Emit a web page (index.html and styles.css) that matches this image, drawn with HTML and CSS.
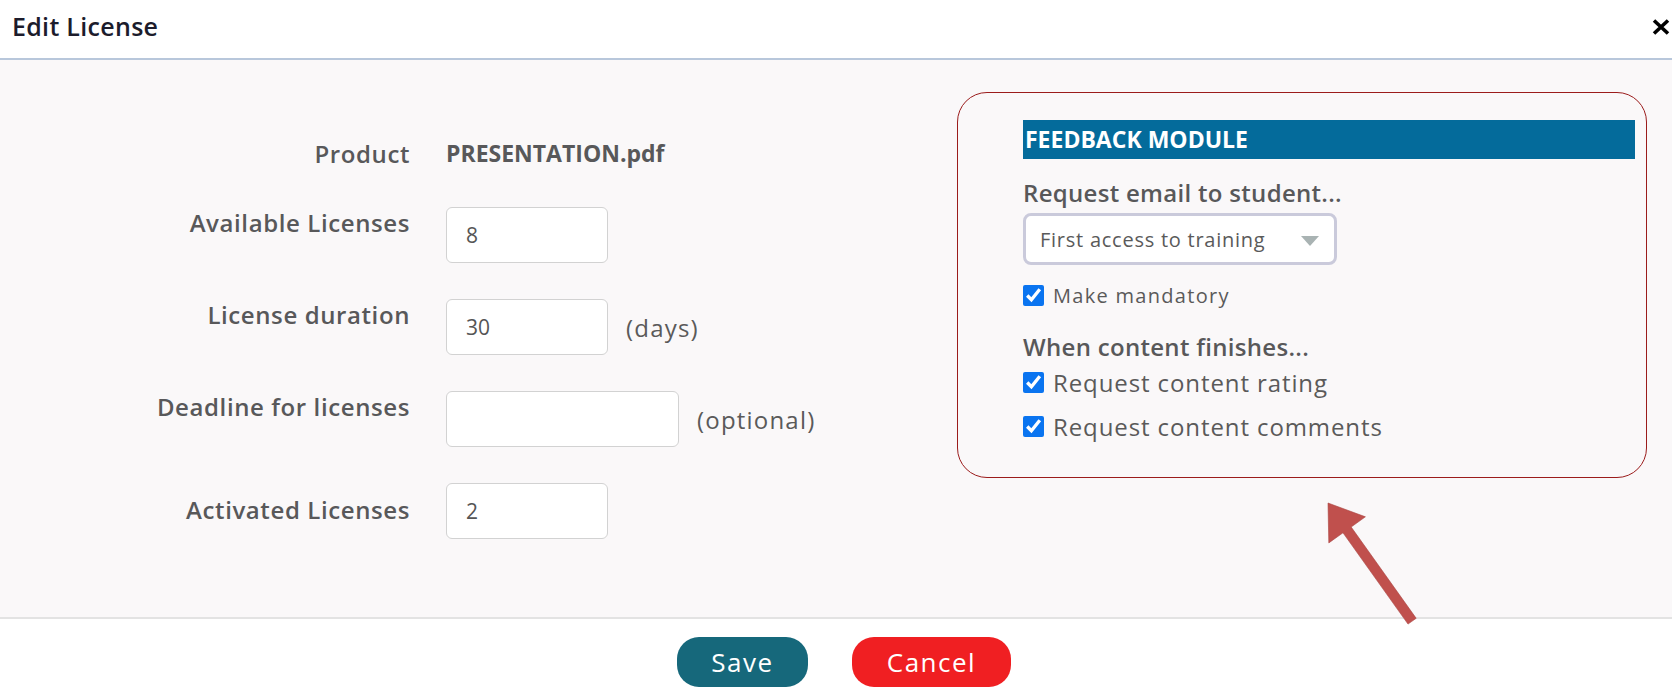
FILE: index.html
```html
<!DOCTYPE html>
<html lang="en">
<head>
    <meta charset="UTF-8">
    <title>Edit License</title>
    <link rel="stylesheet" href="styles.css">
</head>
<body>
    <div class="modal">
        <header class="modal-header">
            <h2 class="modal-title">Edit License</h2>
            <button class="close-btn" type="button" aria-label="Close">
                <svg width="18" height="16" viewBox="0 0 18 16">
                    <path d="M2 1.5 L16 14.5 M16 1.5 L2 14.5" stroke="#000" stroke-width="3.6" fill="none"/>
                </svg>
            </button>
        </header>

        <main class="modal-body">
            <form class="license-form">
                <div class="field-row product-row">
                    <span class="field-label">Product</span>
                    <span class="product-name">PRESENTATION.pdf</span>
                </div>
                <div class="field-row">
                    <label class="field-label" for="available">Available Licenses</label>
                    <div class="field-value">
                        <input class="text-input" id="available" type="text" value="8">
                    </div>
                </div>
                <div class="field-row">
                    <label class="field-label" for="duration">License duration</label>
                    <div class="field-value">
                        <input class="text-input" id="duration" type="text" value="30">
                        <span class="field-hint">(days)</span>
                    </div>
                </div>
                <div class="field-row">
                    <label class="field-label" for="deadline">Deadline for licenses</label>
                    <div class="field-value">
                        <input class="text-input wide" id="deadline" type="text" value="">
                        <span class="field-hint">(optional)</span>
                    </div>
                </div>
                <div class="field-row">
                    <label class="field-label low" for="activated">Activated Licenses</label>
                    <div class="field-value">
                        <input class="text-input" id="activated" type="text" value="2">
                    </div>
                </div>
            </form>

            <section class="feedback-box">
                <div class="feedback-title">FEEDBACK MODULE</div>
                <div class="feedback-question">Request email to student...</div>
                <div class="select-wrap">
                    <select class="select-input">
                        <option>First access to training</option>
                        <option>After finishing the content</option>
                    </select>
                </div>
                <label class="check-row small">
                    <input type="checkbox" checked>
                    <span>Make mandatory</span>
                </label>
                <div class="feedback-question second">When content finishes...</div>
                <label class="check-row">
                    <input type="checkbox" checked>
                    <span>Request content rating</span>
                </label>
                <label class="check-row">
                    <input type="checkbox" checked>
                    <span>Request content comments</span>
                </label>
            </section>

            <!-- flecha que señala el módulo de feedback -->
            <svg class="pointer-arrow" width="110" height="140" viewBox="0 0 110 140">
                <polygon points="8,8 45.4,21.8 31.2,32 96.2,123.3 88,129.1 23,37.8 8.8,47.9" fill="#c0504d" stroke="#a94442" stroke-width="0.6"/>
            </svg>
        </main>

        <footer class="modal-footer">
            <button class="btn btn-save" type="button">Save</button>
            <button class="btn btn-cancel" type="button">Cancel</button>
        </footer>
    </div>
</body>
</html>
```

FILE: styles.css
```css
/* Estilos generales */
body {
    margin: 0;
    font-family: "Open Sans", "Noto Sans", sans-serif;
    color: #555;
    background: #fff;
}

.modal {
    width: 1672px;
    height: 694px;
    display: flex;
    flex-direction: column;
}

/* Cabecera */
.modal-header {
    height: 58px;
    border-bottom: 2px solid #b8c7db;
    display: flex;
    align-items: center;
    justify-content: space-between;
    padding: 0 2px 0 12px;
}

.modal-title {
    margin: 0 0 7px 0;
    font-size: 25px;
    font-weight: 600;
    letter-spacing: 0.3px;
    color: #1c1c2c;
}

.close-btn {
    border: none;
    background: none;
    padding: 0;
    margin-bottom: 5px;
    display: flex;
}

/* Cuerpo */
.modal-body {
    position: relative;
    height: 557px;
    box-sizing: border-box;
    background: #faf8f9;
    padding-top: 32px;
    display: grid;
    grid-template-columns: 957px 690px;
    align-items: start;
}

.license-form {
    padding-top: 46px;
    display: flex;
    flex-direction: column;
    gap: 36px;
}

.field-row {
    display: grid;
    grid-template-columns: 410px 1fr;
    column-gap: 36px;
    align-items: start;
}

.product-row {
    margin-bottom: 2px;
}

.field-label {
    text-align: right;
    font-size: 24px;
    line-height: 31px;
    font-weight: 600;
    letter-spacing: 0.6px;
    color: #58585a;
}

.field-label.low {
    padding-top: 11px;
}

.product-name {
    font-size: 23px;
    line-height: 31px;
    font-weight: 700;
    color: #58585a;
}

.field-value {
    display: flex;
    align-items: center;
    gap: 18px;
}

.text-input {
    width: 162px;
    height: 56px;
    box-sizing: border-box;
    border: 1.5px solid #d2d2d2;
    border-radius: 6px;
    background: #fff;
    padding: 0 0 0 19px;
    font-family: inherit;
    font-size: 21px;
    color: #555;
}

.text-input.wide {
    width: 233px;
}

.field-hint {
    font-size: 24px;
    letter-spacing: 1.2px;
    color: #5a5a5a;
}

/* Caja del módulo de feedback */
.feedback-box {
    height: 386px;
    box-sizing: border-box;
    border: 1px solid #9b1c1c;
    border-radius: 30px;
    padding: 27px 11px 0 65px;
}

.feedback-title {
    height: 39px;
    line-height: 39px;
    background: #046b9b;
    color: #fff;
    font-size: 23px;
    font-weight: 700;
    padding-left: 2px;
}

.feedback-question {
    margin-top: 18px;
    font-size: 24px;
    line-height: 31px;
    font-weight: 600;
    letter-spacing: 0.3px;
    color: #58585a;
}

.feedback-question.second {
    margin-top: 25px;
}

.select-wrap {
    position: relative;
    width: 314px;
    height: 52px;
    margin-top: 5px;
}

.select-input {
    appearance: none;
    width: 100%;
    height: 100%;
    box-sizing: border-box;
    border: 3px solid #cacadb;
    border-radius: 8px;
    background: #fff;
    padding-left: 14px;
    font-family: inherit;
    font-size: 20px;
    letter-spacing: 0.75px;
    color: #5a5a5a;
}

/* triangulo del desplegable */
.select-wrap::after {
    content: "";
    position: absolute;
    right: 18px;
    top: 23px;
    border-left: 9px solid transparent;
    border-right: 9px solid transparent;
    border-top: 10px solid #a9b3b3;
}

.check-row {
    display: flex;
    align-items: center;
    gap: 9px;
    height: 22px;
    margin-top: 22px;
    font-size: 24px;
    letter-spacing: 0.9px;
    color: #5a5a5a;
}

.check-row.small {
    margin-top: 19px;
    font-size: 20px;
    letter-spacing: 1.3px;
}

.feedback-question + .check-row {
    margin-top: 9px;
}

.check-row input {
    width: 21px;
    height: 21px;
    margin: 0;
    accent-color: #0a74f0;
}

.pointer-arrow {
    position: absolute;
    left: 1320px;
    top: 435px;
    z-index: 2;
}

/* Pie con los botones */
.modal-footer {
    flex: 1;
    border-top: 2px solid #e3e3e3;
    display: flex;
    justify-content: center;
    align-items: flex-start;
    gap: 44px;
    padding: 18px 0 0 16px;
}

.btn {
    height: 50px;
    border: none;
    border-radius: 22px;
    color: #fff;
    font-family: inherit;
    font-size: 26px;
    letter-spacing: 1.5px;
}

.btn-save {
    width: 131px;
    background: #16687b;
}

.btn-cancel {
    width: 159px;
    background: #f01f22;
}
```
